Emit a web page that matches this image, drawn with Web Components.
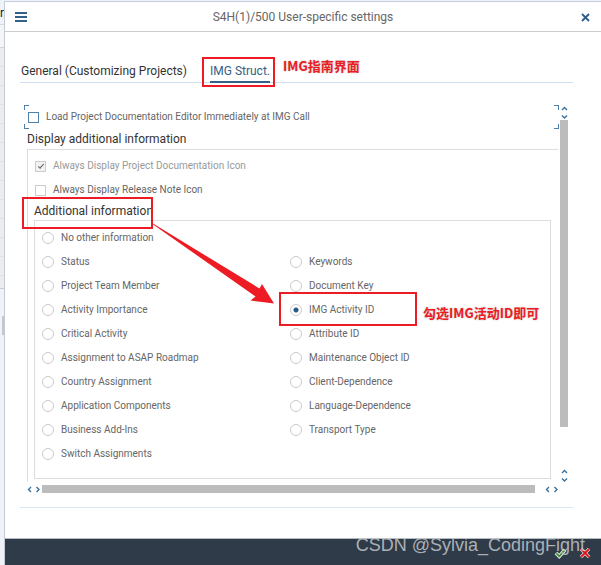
<!DOCTYPE html>
<html lang="en">
<head>
<meta charset="utf-8">
<title>S4H(1)/500 User-specific settings</title>
<style>
  html, body { height: 100%; }
  body { margin: 0; background: #edf3f9; font: 10px/24px Roboto, "Noto Sans CJK SC", sans-serif; color: #666; }
</style>
</head>
<body>
<settings-page></settings-page>
<script>
const define = (name, html, setup) => customElements.define(name, class extends HTMLElement {
  connectedCallback() {
    if (this.shadowRoot) return;
    const root = this.attachShadow({ mode: 'open' });
    const t = document.createElement('template');
    t.innerHTML = html;
    root.append(t.content.cloneNode(true));
    if (setup) setup(this, root);
  }
});

/* Sliver of the window behind the dialog */
define('back-window', `
<style>
  :host { display: flex; flex-direction: column; overflow: hidden; color: #222; font-size: 12px; }
  .head { height: 25px; padding-top: 2px; box-sizing: border-box; border-bottom: 1px solid #d3d8de; line-height: 22px; background: #edf3f9; }
  .bar { height: 22px; background: #f5f5f5; border-bottom: 1px solid #d4d4d4; }
  .rows { height: 240px; background: repeating-linear-gradient(#ececec 0 18px, #e1e1e1 18px 19px); border-bottom: 1px solid #ccc; }
  .grip { width: 2px; height: 19px; margin: 27px 0 0 auto; background: #c4c8cc; }
</style>
<div class="head">r</div><div class="bar"></div><div class="rows"></div><div class="grip"></div>`);

define('dialog-header', `
<style>
  :host { display: grid; grid-template-columns: 32px 1fr 32px; align-items: center; height: 29px; padding-top: 1px; box-sizing: border-box; height: 30px; border-bottom: 1px solid #ccc; background: #fff; }
  h1 { margin: 0; font-size: 12px; line-height: 20px; font-weight: 400; text-align: center; color: #666; }
  button { border: 0; padding: 0; background: none; height: 24px; display: grid; place-items: center; }
</style>
<button aria-label="Menu"><svg width="12" height="12" viewBox="0 0 12 12"><path d="M0 2h12M0 6h12M0 10h12" stroke="#346187" stroke-width="2"/></svg></button>
<h1><slot></slot></h1>
<button aria-label="Close"><svg width="9" height="9" viewBox="0 0 9 9"><path d="M1 1l7 7M8 1l-7 7" stroke="#2d5b8c" stroke-width="1.8"/></svg></button>`);

define('tab-strip', `
<style>
  :host { display: flex; gap: 23px; padding-left: 1px; border-bottom: 1px solid #cddff0; box-sizing: border-box; height: 23px; }
  button { border: 0; padding: 0; background: none; font: inherit; font-size: 12px; line-height: 22px; color: #333; height: 23px; display: flex; box-sizing: border-box; }
  button[aria-selected=true] { color: #346187; border-bottom: 1px solid #346187; box-shadow: inset 0 -1px #346187; }
</style>
<button role="tab" aria-selected="false">General (Customizing Projects)</button>
<button role="tab" aria-selected="true">IMG Struct.</button>`);

define('check-field', `
<style>
  :host { display: block; position: relative; height: 24px; }
  label { display: flex; align-items: center; gap: 7px; line-height: 24px; }
  input { appearance: none; box-sizing: border-box; width: 11px; height: 11px; margin: 0; border: 1px solid #ccc; background: #fff; display: grid; place-items: center; }
  input:checked { background: #f3f3f3; }
  input:checked::before { content: ""; width: 5px; height: 2px; margin-bottom: 2px; border: solid #666; border-width: 0 0 1px 1px; rotate: -48deg; }
  :host([disabled]) label { color: #999; }
  :host([focused]) input { border-color: #4f80aa; }
  i { display: none; position: absolute; width: 4px; height: 4px; border: 0 solid #4f80aa; }
  :host([focused]) i { display: block; }
  .a { left: -3px; top: 0; border-width: 1px 0 0 1px; } .b { right: -1px; top: 0; border-width: 1px 1px 0 0; }
  .c { left: -3px; bottom: 0; border-width: 0 0 1px 1px; } .d { right: -1px; bottom: 0; border-width: 0 1px 1px 0; }
</style>
<label><input type="checkbox"><span><slot></slot></span></label><i class="a"></i><i class="b"></i><i class="c"></i><i class="d"></i>`,
(host, root) => {
  const box = root.querySelector('input');
  box.checked = host.hasAttribute('checked');
  box.disabled = host.hasAttribute('disabled');
});

define('radio-options', `
<style>
  :host { display: block; }
  fieldset { margin: 0; padding: 5px 7px 12px; min-width: 0; border: 1px solid #ddd; display: grid; grid-template-columns: 248px 1fr; grid-auto-rows: 24px; }
  label { display: flex; align-items: center; gap: 7px; line-height: 24px; }
  label:first-child { grid-column: 1 / -1; }
  input { appearance: none; box-sizing: border-box; width: 12px; height: 12px; margin: 0; border: 1px solid #ccc; border-radius: 50%; background: #fff; }
  input:checked { background: radial-gradient(circle, #245a85 2px, #fff 3px); }
</style>
<fieldset aria-label="Additional information"></fieldset>`,
(host, root) => {
  const names = ['No other information', 'Status', 'Keywords', 'Project Team Member', 'Document Key', 'Activity Importance',
    'IMG Activity ID', 'Critical Activity', 'Attribute ID', 'Assignment to ASAP Roadmap', 'Maintenance Object ID', 'Country Assignment',
    'Client-Dependence', 'Application Components', 'Language-Dependence', 'Business Add-Ins', 'Transport Type', 'Switch Assignments'];
  root.querySelector('fieldset').innerHTML = names.map(n =>
    `<label><input type="radio" name="info"${n === 'IMG Activity ID' ? ' checked' : ''}><span>${n}</span></label>`).join('');
});

define('scroll-bar', `
<style>
  :host { display: flex; align-items: center; --line: #3a719d; }
  :host([vertical]) { flex-direction: column; }
  .pair { display: flex; gap: 3px; }
  :host([vertical]) .pair { flex-direction: column; gap: 2px; }
  button { border: 0; padding: 0; background: none; width: 5px; height: 8px; display: grid; place-items: center; }
  :host([vertical]) button { width: 8px; height: 6px; }
  .track { flex: 1; align-self: stretch; margin: 0 10px 0 2px; background: #bcbcbc; }
  :host([vertical]) .track { margin: 1px 0 41px; }
  path { fill: none; stroke: var(--line); stroke-width: 1.4; }
</style>
<div class="pair first"></div><div class="track"></div><div class="pair last"></div>`,
(host, root) => {
  const v = host.hasAttribute('vertical');
  const marks = v ? ['M1 4l2.5-2.5L6 4', 'M1 1.5l2.5 2.5L6 1.5'] : ['M4 1L1.5 3.5 4 6', 'M1.5 1L4 3.5 1.5 6'];
  root.querySelectorAll('.pair').forEach(p => p.innerHTML = marks.map((d, i) =>
    `<button aria-label="${i ? 'Forward' : 'Back'}"><svg width="${v ? 7 : 5}" height="${v ? 5 : 7}"><path d="${d}"/></svg></button>`).join(''));
});

define('dialog-footer', `
<style>
  :host { display: flex; justify-content: flex-end; align-items: center; gap: 14px; height: 27px; padding: 1px 11px 0 0; box-sizing: border-box; background: #2f3b48; border-top: 1px solid #b5bcc3; position: relative; }
  button { border: 0; padding: 0; background: none; display: grid; }
  svg { overflow: visible; }
  p { position: absolute; right: 16px; top: -6px; margin: 0; font: 18px/24px "Liberation Sans", sans-serif; color: #c3c7cbd9; white-space: nowrap; z-index: 1; pointer-events: none; }
</style>
<p>CSDN @Sylvia_CodingFight</p>
<button aria-label="Accept"><svg width="11" height="10" viewBox="0 0 13 12"><path d="M1 6l4 4L12 2" fill="none" stroke="#dfeadb" stroke-width="4.5"/><path d="M1.5 6.5l3.5 3.5L11.5 2.5" fill="none" stroke="#3d8a3a" stroke-width="2"/></svg></button>
<button aria-label="Cancel"><svg width="10" height="10" viewBox="0 0 12 12"><path d="M1 1l10 10M11 1L1 11" stroke="#f2dede" stroke-width="4"/><path d="M1 1l10 10M11 1l-10 10" stroke="#d4151b" stroke-width="2.4"/></svg></button>`);

/* Red mark-up laid over the dialog */
define('mark-up', `
<style>
  :host { position: absolute; inset: 0; pointer-events: none; overflow: hidden; }
  i { position: absolute; box-sizing: border-box; border: 2px solid #ed1c24; }
  p { position: absolute; margin: 0; font: bold 13px/20px "Noto Sans CJK SC", sans-serif; color: #ed1c24; white-space: nowrap; text-shadow: 0 0 2px #bbb; }
  svg { position: absolute; left: 150px; top: 220px; }
</style>
<i style="left:202px;top:57px;width:73px;height:30px"></i>
<i style="left:22px;top:197px;width:131px;height:32px"></i>
<i style="left:279px;top:292px;width:138px;height:34px"></i>
<svg width="126" height="86"><path d="M1 3L3 3.5L109.5 68.5L112 64L124 83.5L100.5 80.5L105.5 76.5Z" fill="#ed1c24"/></svg>
<p style="left:283px;top:56px">IMG指南界面</p>
<p style="left:423px;top:303px">勾选IMG活动ID即可</p>`);

define('settings-page', `
<style>
  :host { display: grid; grid-template-columns: 4px 1fr; min-height: 100%; position: relative; overflow: hidden; }
  main { margin-top: 1px; border-top: 1px solid #c5d0dc; border-left: 1px solid #c5cbd2; background: #fff; display: flex; flex-direction: column; }
  .content { flex: 1; margin: 28px 28px 0 15px; display: flex; flex-direction: column; }
  .pane { margin: 22px 5px 0 7px; display: grid; grid-template-columns: 1fr 8px; column-gap: 2px; row-gap: 3px; }
  h2 { margin: 0; font-size: 12px; line-height: 20px; font-weight: 400; color: #333; }
  .load { padding-left: 1px; }
  .group { border: solid #ddd; border-width: 1px 0 0 1px; padding: 4px 7px 3px 6px; }
  .group check-field { margin-left: 1px; }
  .group h2 { line-height: 18px; }
  hr { width: 100%; margin: 14px 0 28px; border: 0; border-top: 1px solid #dce6ef; }
</style>
<back-window></back-window>
<main>
  <dialog-header>S4H(1)/500 User-specific settings</dialog-header>
  <div class="content">
    <tab-strip role="tablist"></tab-strip>
    <div class="pane">
      <div>
        <check-field class="load" focused>Load Project Documentation Editor Immediately at IMG Call</check-field>
        <h2>Display additional information</h2>
        <div class="group">
          <check-field checked disabled>Always Display Project Documentation Icon</check-field>
          <check-field>Always Display Release Note Icon</check-field>
          <h2>Additional information</h2>
          <radio-options></radio-options>
        </div>
      </div>
      <scroll-bar vertical></scroll-bar>
      <scroll-bar></scroll-bar>
    </div>
    <hr>
  </div>
  <dialog-footer></dialog-footer>
</main>
<mark-up></mark-up>`);
</script>
</body>
</html>
